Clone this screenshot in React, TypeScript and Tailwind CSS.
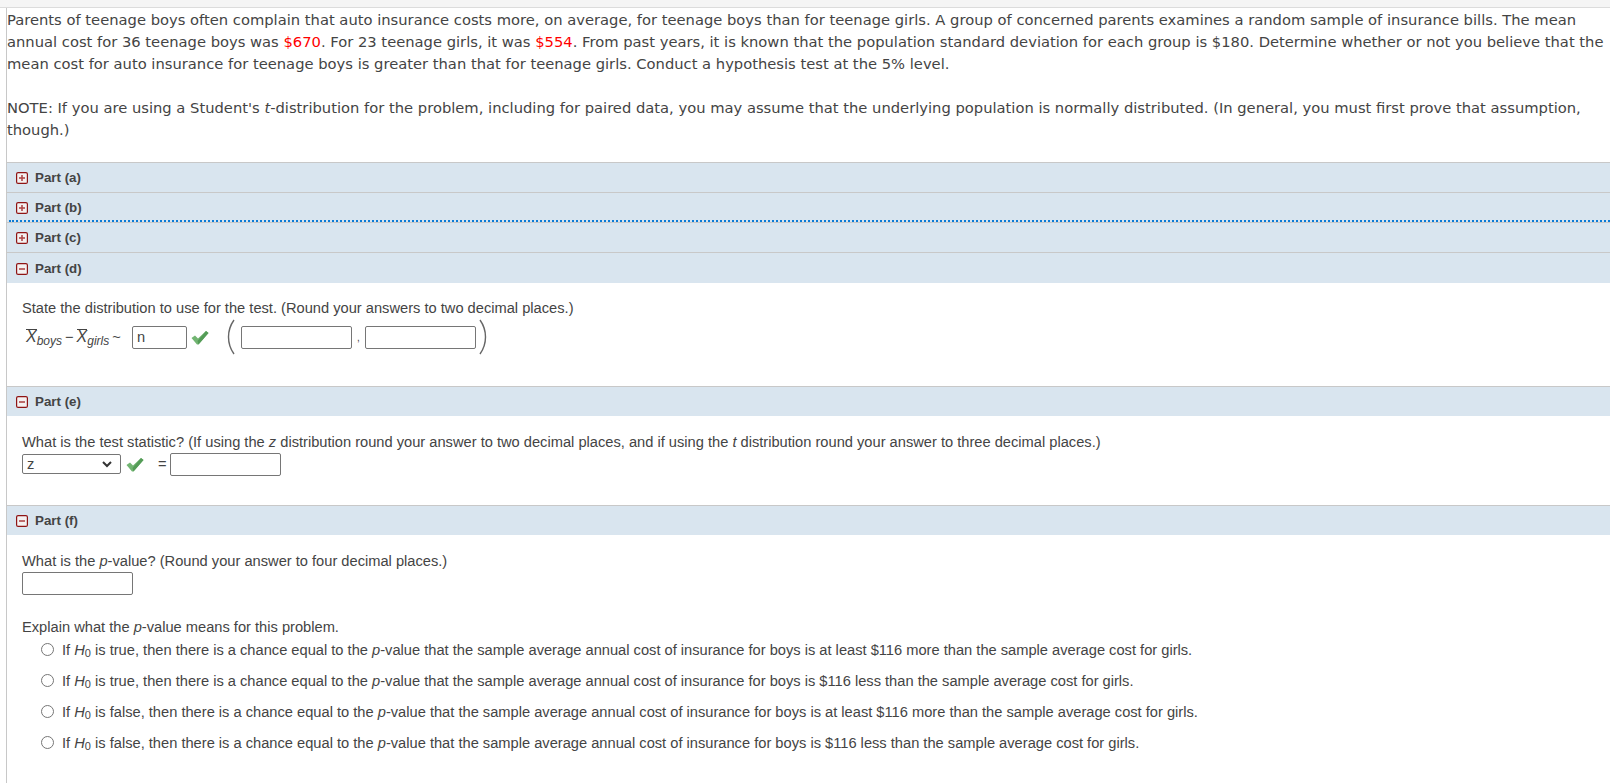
import React from 'react';

const Toggle: React.FC<{ open?: boolean }> = ({ open }) => (
    <svg width="12" height="12" viewBox="0 0 12 12" className="shrink-0">
        <rect x="0.6" y="0.6" width="10.8" height="10.8" rx="1.5" fill="#f4f1f1" stroke="#8f1414" strokeWidth="1.2" />
        <rect x="3" y="5.2" width="6" height="1.6" fill="#b04a4a" />
        {!open && <rect x="5.2" y="3" width="1.6" height="6" fill="#b04a4a" />}
    </svg>
);

const PartHeader: React.FC<{ label: string; open?: boolean; focused?: boolean; tall?: boolean }> = ({ label, open, focused, tall }) => (
    <div className={`relative ${tall ? 'h-[31px] pt-px' : 'h-[30px]'} bg-[#d9e5ef] border-t border-[#c8c8c8] flex items-center pl-[9px] gap-[7px]`}>
        <Toggle open={open} />
        <span className="font-bold text-[13.33px] text-[#444]">{label}</span>
        {focused && <div className="absolute left-[2px] right-0 bottom-0 border-b-2 border-dotted border-[#0a7ad6]" />}
    </div>
);

const Check = () => (
    <svg width="18" height="15" viewBox="0 0 18 15" className="shrink-0">
        <path d="M0.5 8 L4 5.5 L7 8.5 L15 1 L17.5 3 L7.5 14.5 L6 14.5 Z" fill="#72b572" />
        <path d="M15 1 L17.5 3 L7.5 14.5 L6.5 11 Z" fill="#549c57" />
    </svg>
);

const Field: React.FC<{ w: string; children?: React.ReactNode }> = ({ children, w }) => (
    <div className={`${w} h-[23px] border border-[#767676] rounded-[2px] bg-white text-[14.67px] text-[#444] leading-[21px] pl-[4px] shrink-0`}>{children}</div>
);

const Paren: React.FC<{ flip?: boolean }> = ({ flip }) => (
    <svg width="8" height="36" viewBox="0 0 8 36" className={`shrink-0 ${flip ? '-scale-x-100' : ''}`}>
        <path d="M7 1 C2 8 1.5 13 1.5 18 C1.5 23 2 28 7 35" fill="none" stroke="#666" strokeWidth="1.4" />
    </svg>
);

const Xbar: React.FC<{ sub: string }> = ({ sub }) => (
    <span className="italic whitespace-nowrap">
        <span className="border-t border-[#444] leading-[14px] inline-block text-[16px]">X</span>
        <sub className="text-[12px]">{sub}</sub>
    </span>
);

const H0 = () => (
    <span className="italic">
        H<sub className="not-italic text-[11px]">0</sub>
    </span>
);

const options = [
    ['true', 'is at least $116 more than'],
    ['true', 'is $116 less than'],
    ['false', 'is at least $116 more than'],
    ['false', 'is $116 less than'],
];

export default function App() {
    return (
        <div className="h-[783px] overflow-hidden bg-white font-['Liberation_Sans',sans-serif] text-[14.67px] text-[#444]">
            <div className="h-[7px] bg-[#f5f5f5] border-b border-[#dcdcdc] box-content" />
            <div className="ml-[6px] border-l border-[#c8c8c8] h-[775px]">
                <div className="h-[154px] pt-px font-['DejaVu_Sans',sans-serif] text-[14.72px] leading-[22px] whitespace-nowrap">
                    Parents of teenage boys often complain that auto insurance costs more, on average, for teenage boys than for teenage girls. A group of concerned parents examines a random sample of insurance bills. The mean
                    <br />
                    annual cost for 36 teenage boys was <span className="text-[#f00]">$670</span>. For 23 teenage girls, it was <span className="text-[#f00]">$554</span>. From past years, it is known that the population standard deviation for each group is $180. Determine whether or not you believe that the
                    <br />
                    mean cost for auto insurance for teenage boys is greater than that for teenage girls. Conduct a hypothesis test at the 5% level.
                    <br />
                    <br />
                    NOTE: If you are using a Student's <i>t</i>-distribution for the problem, including for paired data, you may assume that the underlying population is normally distributed. (In general, you must first prove that assumption,
                    <br />
                    though.)
                </div>
                <PartHeader label="Part (a)" />
                <PartHeader label="Part (b)" focused />
                <PartHeader label="Part (c)" />
                <PartHeader label="Part (d)" open tall />

                <div className="h-[103px] pl-[15px] pt-[16px]">
                    <div className="leading-[18px]">State the distribution to use for the test. (Round your answers to two decimal places.)</div>
                    <div className="flex items-center mt-[3px] h-[34px]">
                        <span className="w-[106px] ml-[4px] flex items-center gap-[3px] whitespace-nowrap">
                            <Xbar sub="boys" /> − <Xbar sub="girls" /> ~
                        </span>
                        <Field w="w-[55px]">n</Field>
                        <span className="ml-[4px]"><Check /></span>
                        <span className="ml-[18px]"><Paren /></span>
                        <span className="ml-[6px]"><Field w="w-[111px]" /></span>
                        <span className="w-[13px] text-center text-[10px]">,</span>
                        <Field w="w-[111px]" />
                        <span className="ml-[3px]"><Paren flip /></span>
                    </div>
                </div>

                <PartHeader label="Part (e)" open />
                <div className="h-[89px] pl-[15px] pt-[17px]">
                    <div className="leading-[18px]">
                        What is the test statistic? (If using the <i>z</i> distribution round your answer to two decimal places, and if using the <i>t</i> distribution round your answer to three decimal places.)
                    </div>
                    <div className="flex items-center mt-[1px] h-[24px]">
                        <div className="w-[99px] h-[20px] border border-[#767676] rounded-[2px] flex items-center justify-between pl-[4px] pr-[8px] text-[14.67px]">
                            z
                            <svg width="10" height="7" viewBox="0 0 10 7"><path d="M1 1 L5 5 L9 1" fill="none" stroke="#333" strokeWidth="2" /></svg>
                        </div>
                        <span className="ml-[5px]"><Check /></span>
                        <span className="ml-[14px] mr-[2px] w-[10px]">=</span>
                        <Field w="w-[111px]" />
                    </div>
                </div>

                <PartHeader label="Part (f)" open />
                <div className="pl-[15px] pt-[17px]">
                    <div className="leading-[18px]">
                        What is the <i>p</i>-value? (Round your answer to four decimal places.)
                    </div>
                    <div className="mt-[2px]"><Field w="w-[111px]" /></div>
                    <div className="mt-[23px] leading-[18px]">
                        Explain what the <i>p</i>-value means for this problem.
                    </div>
                    <div className="flex flex-col -mt-[2px]">
                        {options.map(([state, rel], i) => (
                            <div key={i} className="flex items-center h-[31px] pl-[19px] gap-[8px]">
                                <span className="w-[13px] h-[13px] rounded-full border border-[#767676] bg-white shrink-0" />
                                <span>
                                    If <H0 /> is {state}, then there is a chance equal to the <i>p</i>-value that the sample average annual cost of insurance for boys {rel} the sample average cost for girls.
                                </span>
                            </div>
                        ))}
                    </div>
                </div>
            </div>
        </div>
    );
}
